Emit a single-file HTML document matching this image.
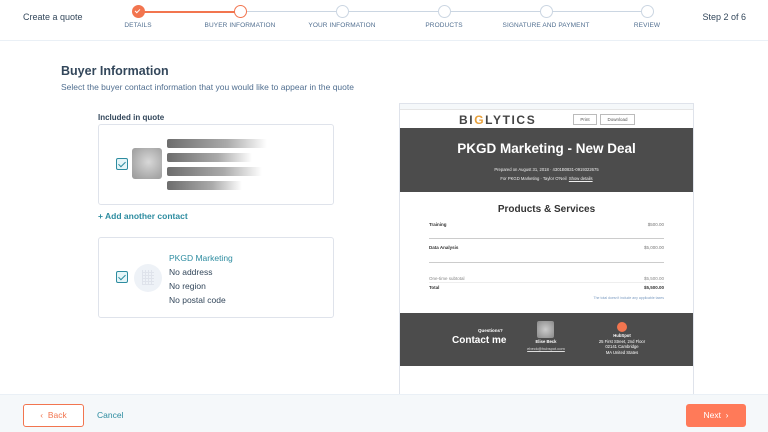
<!DOCTYPE html>
<html><head><meta charset="utf-8">
<style>
*{box-sizing:border-box;margin:0;padding:0}
body{width:768px;height:432px;overflow:hidden;background:#fff;font-family:"Liberation Sans",sans-serif;color:#33475b;position:relative}
.abs{position:absolute}
.step{position:absolute;top:5px;width:13px;height:13px;border-radius:50%;border:1.5px solid #cbd6e2;background:#fff}
.lbl{position:absolute;top:22px;font-size:6.5px;color:#516f90;transform:translateX(-50%);white-space:nowrap;letter-spacing:.1px}
.card{position:absolute;left:98px;width:236px;height:81px;border:1px solid #dfe3eb;border-radius:3px;background:#fff}
.cb{position:absolute;width:12px;height:12px;border:1.5px solid #2d8ca0;border-radius:2px;background:#e5f5f8}
.cb:after{content:"";position:absolute;left:3px;top:0.5px;width:3px;height:6px;border:solid #2d8ca0;border-width:0 1.5px 1.5px 0;transform:rotate(45deg)}
.bar{position:absolute;left:167px;height:9px;border-radius:2px;background:linear-gradient(90deg,#6d6d6d,#aaa 60%,rgba(255,255,255,0))}
.dark{background:#4c4c4c;color:#fff}
.row{position:absolute;left:429px;width:235px;font-size:4.5px;color:#333}
</style></head><body>
<!-- header -->
<div class="abs" style="left:23px;top:12px;font-size:9px;color:#33475b">Create a quote</div>
<div class="abs" style="right:22px;top:12px;font-size:9px;color:#33475b">Step 2 of 6</div>
<div class="abs" style="left:144px;top:11px;width:96px;height:1.5px;background:#f2754f"></div>
<div class="abs" style="left:246px;top:11px;width:402px;height:1px;background:#cbd6e2"></div>
<div class="step" style="left:132px;background:#f2754f;border-color:#f2754f"></div>
<div class="abs" style="left:136px;top:8px;width:3px;height:5px;border:solid #fff;border-width:0 1px 1px 0;transform:rotate(45deg)"></div>
<div class="step" style="left:234px;border-color:#f2754f"></div>
<div class="step" style="left:336px"></div>
<div class="step" style="left:438px"></div>
<div class="step" style="left:540px"></div>
<div class="step" style="left:641px"></div>
<div class="lbl" style="left:138px">DETAILS</div>
<div class="lbl" style="left:240px">BUYER INFORMATION</div>
<div class="lbl" style="left:342px">YOUR INFORMATION</div>
<div class="lbl" style="left:444px">PRODUCTS</div>
<div class="lbl" style="left:546px">SIGNATURE AND PAYMENT</div>
<div class="lbl" style="left:647px">REVIEW</div>
<div class="abs" style="left:0;top:40px;width:768px;height:1px;background:#eaf0f6"></div>

<!-- left -->
<div class="abs" style="left:61px;top:64px;font-size:12.5px;font-weight:bold;color:#33475b">Buyer Information</div>
<div class="abs" style="left:61px;top:82px;font-size:8.5px;color:#516f90">Select the buyer contact information that you would like to appear in the quote</div>
<div class="abs" style="left:98px;top:113px;font-size:8px;font-weight:bold;color:#33475b">Included in quote</div>
<div class="card" style="top:124px"></div>
<div class="cb" style="left:116px;top:158px"></div>
<div class="abs" style="left:132px;top:148px;width:30px;height:31px;border-radius:3px;background:radial-gradient(circle at 55% 45%,#d8d8d8,#a9a9a9 70%,#999)"></div>
<div class="bar" style="top:139px;width:100px"></div>
<div class="bar" style="top:153px;width:85px"></div>
<div class="bar" style="top:167px;width:95px"></div>
<div class="bar" style="top:181px;width:75px"></div>
<div class="abs" style="left:98px;top:211px;font-size:8.5px;font-weight:bold;color:#2d8ca0">+ Add another contact</div>
<div class="card" style="top:237px"></div>
<div class="cb" style="left:116px;top:271px"></div>
<div class="abs" style="left:134px;top:264px;width:28px;height:28px;border-radius:50%;background:#eef2f7"></div>
<div class="abs" style="left:142px;top:270px;width:12px;height:15px;background:repeating-linear-gradient(0deg,#dfe3eb 0 1px,transparent 1px 3px),repeating-linear-gradient(90deg,#dfe3eb 0 1px,transparent 1px 3px)"></div>
<div class="abs" style="left:169px;top:251px;font-size:8.5px;color:#2d8ca0;line-height:14px">PKGD Marketing</div>
<div class="abs" style="left:169px;top:265px;font-size:8.5px;color:#33475b;line-height:14px">No address<br>No region<br>No postal code</div>

<!-- preview -->
<div class="abs" style="left:399px;top:103px;width:295px;height:300px;border:1px solid #dfe3eb;background:#fff"></div>
<div class="abs" style="left:400px;top:104px;width:293px;height:6px;background:#f5f8fa;border-bottom:1px solid #e5e5e5"></div>
<div class="abs" style="left:459px;top:113px;font-size:12px;font-weight:bold;letter-spacing:1.6px;color:#444">BI<span style="color:#e8a03a">G</span>LYTICS</div>
<div class="abs" style="left:573px;top:114px;width:24px;height:11px;border:1px solid #bbb;font-size:4.5px;text-align:center;line-height:9px;color:#555">Print</div>
<div class="abs" style="left:600px;top:114px;width:35px;height:11px;border:1px solid #bbb;font-size:4.5px;text-align:center;line-height:9px;color:#555">Download</div>
<div class="abs dark" style="left:400px;top:128px;width:293px;height:64px"></div>
<div class="abs" style="left:400px;top:141px;width:293px;text-align:center;font-size:13.5px;font-weight:bold;color:#fff">PKGD Marketing - New Deal</div>
<div class="abs" style="left:400px;top:167px;width:293px;text-align:center;font-size:4.2px;color:#eee">Prepared on August 31, 2018 · 4301B0831-0919322675</div>
<div class="abs" style="left:400px;top:176px;width:293px;text-align:center;font-size:4.2px;color:#eee">For PKGD Marketing · Taylor O'Neil &nbsp;<u>Show details</u></div>
<div class="abs" style="left:400px;top:204px;width:293px;text-align:center;font-size:10px;font-weight:bold;color:#333">Products &amp; Services</div>
<div class="row" style="top:222px;font-weight:bold">Training<span style="float:right;font-weight:normal;color:#777">$500.00</span></div>
<div class="abs" style="left:429px;top:238px;width:235px;height:1px;background:#ccc"></div>
<div class="row" style="top:245px;font-weight:bold">Data Analysis<span style="float:right;font-weight:normal;color:#777">$5,000.00</span></div>
<div class="abs" style="left:429px;top:262px;width:235px;height:1px;background:#ccc"></div>
<div class="row" style="top:276px;color:#888">One-time subtotal<span style="float:right">$5,500.00</span></div>
<div class="row" style="top:285px;font-weight:bold">Total<span style="float:right">$5,500.00</span></div>
<div class="abs" style="left:429px;top:282px;width:235px;height:1px;background:#eee"></div>
<div class="row" style="top:296px;font-size:3.5px;color:#7a9ac0;text-align:right">The total doesn't include any applicable taxes</div>
<div class="abs dark" style="left:400px;top:313px;width:293px;height:53px"></div>
<div class="abs" style="left:478px;top:328px;font-size:4.5px;font-weight:bold;color:#fff">Questions?</div>
<div class="abs" style="left:452px;top:335px;font-size:10px;font-weight:bold;color:#fff">Contact me</div>
<div class="abs" style="left:537px;top:321px;width:17px;height:17px;border-radius:2px;background:radial-gradient(circle,#ccc,#888)"></div>
<div class="abs" style="left:520px;top:339px;width:52px;text-align:center;font-size:4.2px;color:#fff;font-weight:bold">Elise Beck</div>
<div class="abs" style="left:520px;top:346px;width:52px;text-align:center;font-size:4px;color:#ddd;text-decoration:underline">ebeck@hubspot.com</div>
<div class="abs" style="left:617px;top:322px;width:10px;height:10px;border-radius:50%;background:#f2754f"></div>
<div class="abs" style="left:592px;top:333px;width:60px;text-align:center;font-size:4.2px;color:#fff;line-height:5.5px"><b>HubSpot</b><br>25 First Street, 2nd Floor<br>02141 Cambridge<br>MA United States</div>

<!-- footer -->
<div class="abs" style="left:0;top:394px;width:768px;height:38px;background:#f5f8fa;border-top:1px solid #eaf0f6"></div>
<div class="abs" style="left:23px;top:404px;width:61px;height:23px;border:1px solid #f2754f;border-radius:3px;background:#fff;font-size:8.5px;color:#f2754f;text-align:center;line-height:21px">‹&nbsp;&nbsp;Back</div>
<div class="abs" style="left:97px;top:410px;font-size:8.5px;color:#2d8ca0">Cancel</div>
<div class="abs" style="left:686px;top:404px;width:60px;height:23px;border-radius:3px;background:#ff7a59;font-size:8.5px;color:#fff;text-align:center;line-height:23px">Next&nbsp;&nbsp;›</div>
</body></html>
